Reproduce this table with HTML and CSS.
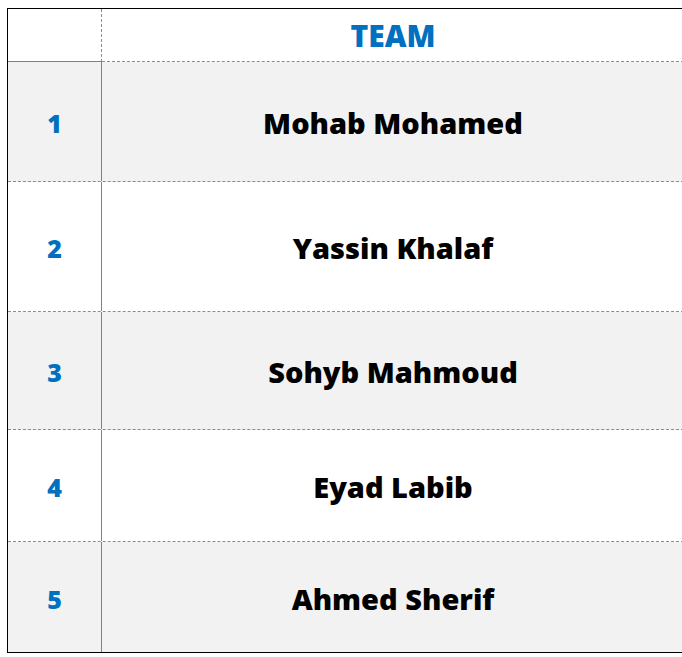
FILE: index.html
```html
<!DOCTYPE html>
<html>
<head>
<meta charset="utf-8">
<link rel="stylesheet" href="styles.css">
</head>
<body>
<div class="sheet">
  <div class="row head">
    <div class="num"></div>
    <div class="name title">TEAM</div>
  </div>
  <div class="row shade r1">
    <div class="num">1</div>
    <div class="name">Mohab Mohamed</div>
  </div>
  <div class="row r2">
    <div class="num">2</div>
    <div class="name">Yassin Khalaf</div>
  </div>
  <div class="row shade r3">
    <div class="num">3</div>
    <div class="name">Sohyb Mahmoud</div>
  </div>
  <div class="row r4">
    <div class="num">4</div>
    <div class="name">Eyad Labib</div>
  </div>
  <div class="row shade r5 last">
    <div class="num">5</div>
    <div class="name">Ahmed Sherif</div>
  </div>
</div>
</body>
</html>
```
FILE: styles.css
```css
html, body {
  margin: 0;
  padding: 0;
  background: #ffffff;
  overflow: hidden;
}
body {
  font-family: "Open Sans", "DejaVu Sans", sans-serif;
  font-weight: 800;
}
.sheet {
  margin: 8px 0 0 7px;
  width: 676px;
  border-top: 1px solid #000;
  border-left: 1px solid #000;
  border-bottom: 1px solid #000;
}
.row {
  display: grid;
  grid-template-columns: 94px 1fr;
  border-bottom: 1px dashed #8c8c8c;
}
.row.last { border-bottom: none; }
.row.head {
  height: 53px;
  border-bottom: none;
}
.head .num {
  border-right: 1px dashed #8c8c8c;
  border-bottom: 1px solid #808080;
}
.head .name {
  border-bottom: 1px dashed #8c8c8c;
}
.shade { background: #f2f2f2; }
.r1 { height: 119px; }
.r2 { height: 129px; }
.r3 { height: 117px; }
.r4 { height: 111px; }
.r5 { height: 110px; }
.num {
  border-right: 1px solid #808080;
  display: flex;
  align-items: center;
  justify-content: center;
  color: #0070c0;
  font-size: 25px;
  padding-top: 3px;
}
.name {
  display: flex;
  align-items: center;
  justify-content: center;
  color: #000;
  font-size: 29px;
  padding-top: 2px;
}
.name.title {
  color: #0070c0;
  font-size: 30px;
  padding-top: 0;
}
```
